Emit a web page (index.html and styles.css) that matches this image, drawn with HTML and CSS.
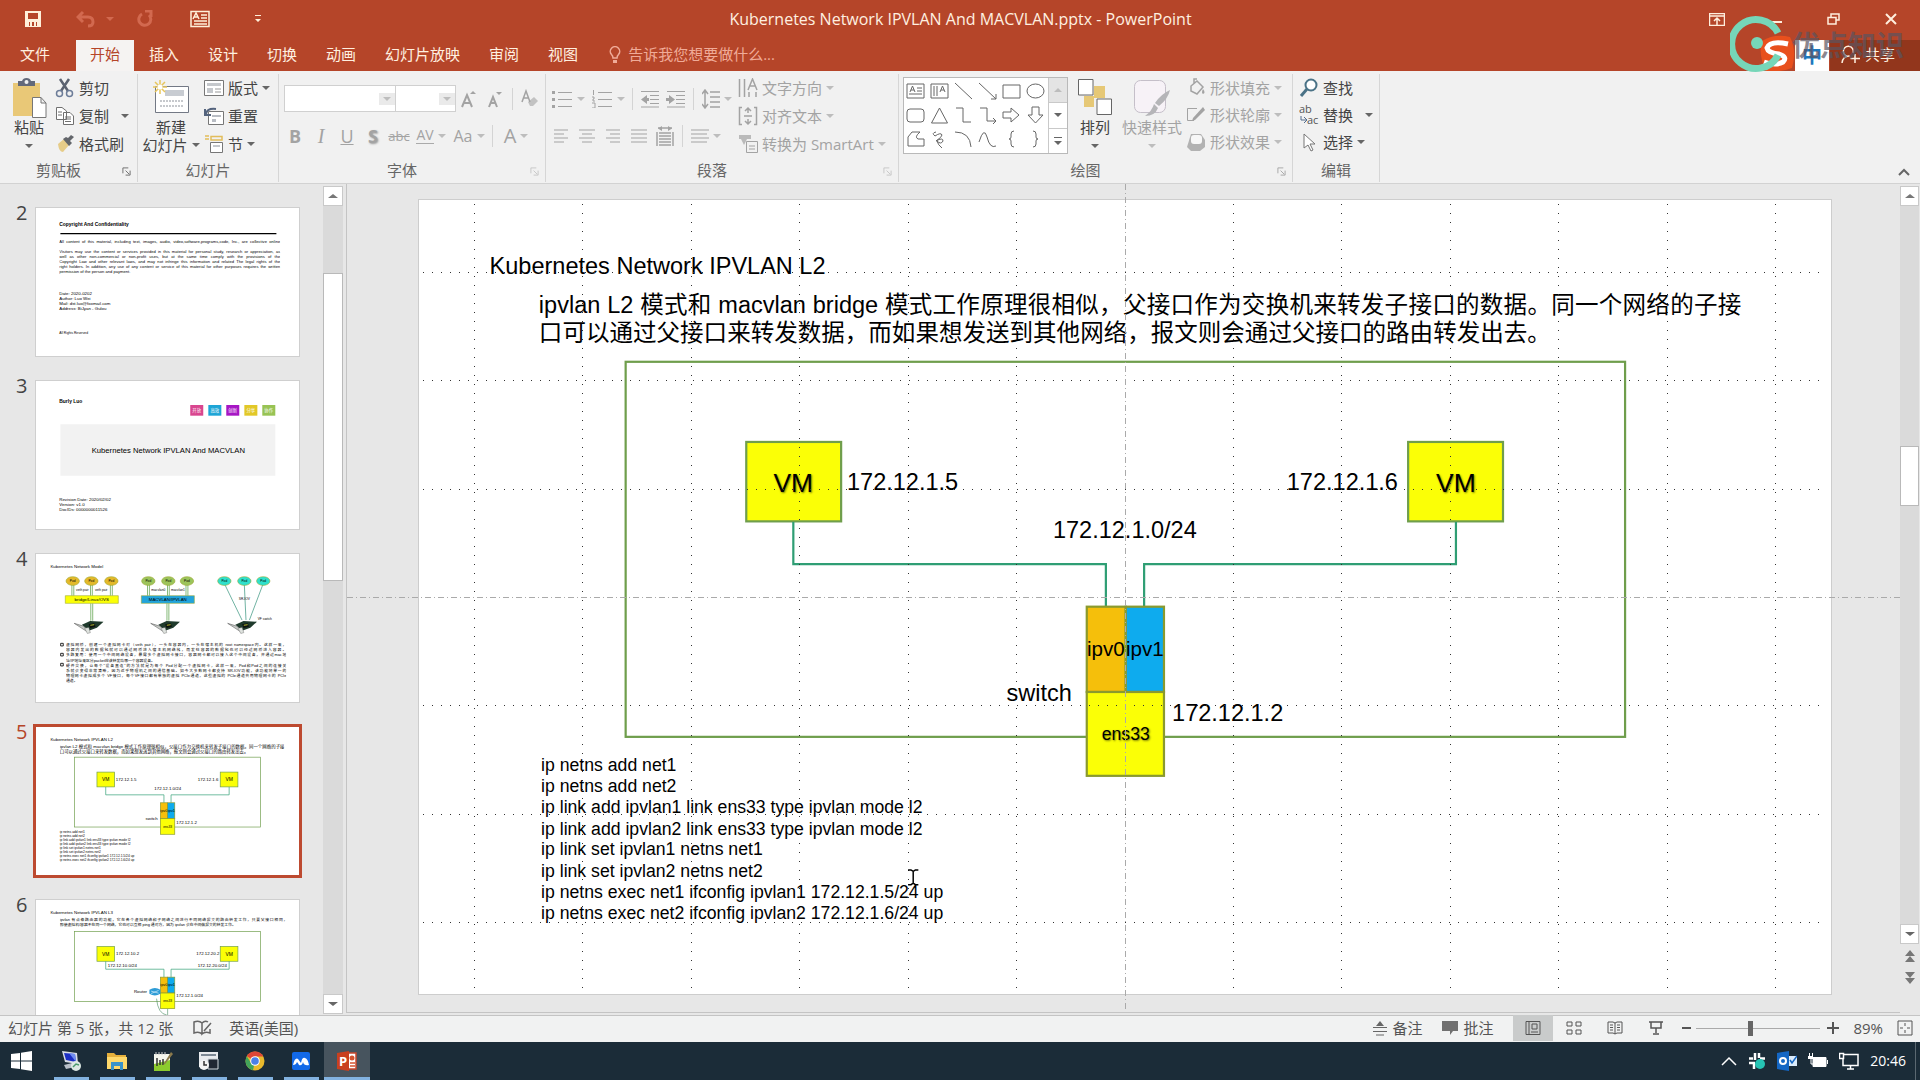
FILE: index.html
```html
<!DOCTYPE html>
<html lang="zh-CN">
<head>
<meta charset="utf-8">
<title>Kubernetes Network IPVLAN And MACVLAN.pptx - PowerPoint</title>
<link rel="stylesheet" href="styles.css">
</head>
<body>
<svg class="defs" aria-hidden="true">
  <symbol id="topology" viewBox="0 0 1920 1080">
    <g fill="none" stroke="#6f9e4c">
      <rect x="281" y="220" width="1359" height="510"/>
      <rect x="445" y="329" width="129" height="108" fill="#fbff06"/>
      <rect x="1345" y="329" width="129" height="108" fill="#fbff06"/>
    </g>
    <path d="M509 438V495H934V553M1410 438V495H986V553" fill="none" stroke="#2f9e74"/>
    <g stroke="#8a9a2e">
      <rect x="908" y="553" width="53" height="116" fill="#f5bf0b"/>
      <rect x="961" y="553" width="52" height="116" fill="#0eabee"/>
      <rect x="908" y="669" width="105" height="114" fill="#fbff06"/>
    </g>
  </symbol>
  <symbol id="nic" viewBox="0 0 220 110">
    <path d="M60 40L120 12L218 18L170 62L110 84Z" fill="#1f3a2c"/>
    <path d="M4 30L100 92L112 84L70 50Z" fill="#c9cdc9" stroke="#555" stroke-width="4"/>
    <path d="M80 66L100 104L122 98L110 60Z" fill="#dfe3df" stroke="#666" stroke-width="3"/>
    <path d="M110 36L150 30L160 54L120 64Z" fill="#0c120e"/>
    <path d="M122 44L150 40" stroke="#d8e23a" stroke-width="6"/>
  </symbol>
  <symbol id="launcher" viewBox="0 0 10 10"><path d="M1 7V1H7M4 4L8 8M9 4V9H4" fill="none" stroke="currentColor"/></symbol>
</svg>

<header class="top">
  <div class="titlebar">
    <div class="qat">
      <button aria-label="保存"><svg width="18" height="18" viewBox="0 0 18 18"><path d="M1 1H17V17H1Z" fill="#fff0da"/><path d="M4 3H14V9H4ZM5 12H13V16H5Z" fill="#b54529"/><path d="M6 12H8V16H6ZM10 12H12V16H10Z" fill="#fff0da"/></svg></button>
      <button class="faded undo" aria-label="撤消"><svg width="20" height="18" viewBox="0 0 20 18"><path d="M7 2L2 7L7 12M3 7H12Q17 7 17 12Q17 16 12 16" fill="none" stroke="currentColor" stroke-width="3"/></svg><i class="caret"></i></button>
      <button class="faded redo" aria-label="恢复"><svg width="18" height="18" viewBox="0 0 18 18"><path d="M6 4A6 6 0 1 0 13 5M9 1H15V7" fill="none" stroke="currentColor" stroke-width="3"/></svg></button>
      <button class="from-start" aria-label="文本框"><svg width="20" height="18" viewBox="0 0 20 18"><path d="M1 1.500H19V16.500H1ZM11 5H17M11 8H17M4 11H17M4 14H17" fill="none" stroke="#fff0da" stroke-width="1.500"/><path d="M3 9L6 3L9 9M4 7H8" fill="none" stroke="#fff0da" stroke-width="1.500"/></svg></button>
      <button class="more" aria-label="自定义"><svg width="8" height="8" viewBox="0 0 8 8"><path d="M1 0H7V1H1ZM1 4H7L4 7Z" fill="#fff0da"/></svg></button>
    </div>
    <h1>Kubernetes Network IPVLAN And MACVLAN.pptx - PowerPoint</h1>
    <div class="window-buttons">
      <button aria-label="功能区显示选项"><svg width="16" height="13" viewBox="0 0 16 13"><path d="M.5 .5H15.500V12.500H.5ZM.5 3H15.500M8 12V5M5 8L8 5L11 8" fill="none" stroke="#ffeedd" stroke-width="1.500"/></svg></button>
      <button aria-label="最小化"><svg width="12" height="12" viewBox="0 0 12 12"><path d="M1 9H12" stroke="#ffeedd" stroke-width="2"/></svg></button>
      <button aria-label="还原"><svg width="13" height="12" viewBox="0 0 13 12"><path d="M1 4.500H9V11H1ZM4 4V1H12V7H9" fill="none" stroke="#ffeedd" stroke-width="1.500"/></svg></button>
      <button aria-label="关闭"><svg width="12" height="12" viewBox="0 0 12 12"><path d="M1 1L11 11M11 1L1 11" stroke="#ffeedd" stroke-width="2"/></svg></button>
    </div>
  </div>
  <nav class="tabs">
    <button class="file">文件</button>
    <button class="active">开始</button>
    <button>插入</button>
    <button>设计</button>
    <button>切换</button>
    <button>动画</button>
    <button>幻灯片放映</button>
    <button>审阅</button>
    <button>视图</button>
    <button class="tell"><svg width="12" height="17" viewBox="0 0 12 17"><path d="M4 12Q4 10 2.500 8.500A4.700 4.700 0 1 1 9.500 8.500Q8 10 8 12Z" fill="none" stroke="currentColor" stroke-width="1.500"/><path d="M4 14H8V17H4Z" fill="currentColor"/></svg>告诉我您想要做什么...</button>
    <button class="share"><svg width="20" height="20" viewBox="0 0 20 20"><path d="M1 19Q2 12 8 12M14 10V19M9.500 14.500H19M9 12A5 5 0 1 1 12 9" fill="none" stroke="#fff0e0" stroke-width="1.500"/></svg>共享</button>
  </nav>
  <div class="ime" aria-hidden="true">
    <svg width="36" height="38" viewBox="0 0 36 38"><path d="M3 6Q16 -2 31 2Q38 16 33 33Q20 38 7 36Q-1 20 3 6Z" fill="#e8501d"/><path d="M29 9Q11 5 8 13Q9 18 20 19Q29 22 24 27Q17 31 5 27" fill="none" stroke="#fff" stroke-width="5"/></svg><span>中</span>
  </div>
  <div class="watermark" aria-hidden="true">
    <svg width="58" height="58" viewBox="0 0 58 58"><path d="M48 18A24.500 24.500 0 1 0 48 40" fill="none" stroke="#76d6b8" stroke-width="7"/><circle cx="27" cy="28" r="6" fill="#76d6b8"/></svg><span>优点知识</span>
  </div>
</header>

<section class="ribbon" aria-label="开始">
  <div class="group clipboard">
    <div class="body">
      <button class="big"><svg width="36" height="40" viewBox="0 0 36 40"><path d="M2 5H29V38H2Z" fill="#e9c877"/><path d="M7 8V3H11Q12 0 15.500 0Q19 0 20 3H24V8Z" fill="#63697a"/><circle cx="15.500" cy="4" r="2" fill="#f1f1f1"/><path d="M21.500 19.500H30L35 25V39.500H21.500ZM30 19.500V25H35" fill="#fff" stroke="#777"/></svg><span>粘贴</span><i class="caret"></i></button>
      <div class="stack">
        <button><svg width="20" height="20" viewBox="0 0 20 20"><path d="M5 1L13 13M14 1L6 13" stroke="#5b6270" stroke-width="2.500"/><circle cx="4.500" cy="15.500" r="3" fill="none" stroke="#6d7d99" stroke-width="1.500"/><circle cx="14.500" cy="15.500" r="3" fill="none" stroke="#6d7d99" stroke-width="1.500"/></svg>剪切</button>
        <button><svg width="20" height="20" viewBox="0 0 20 20"><path d="M1.500 1.500H7L11.500 5V13.500H1.500ZM8.500 6.500H15L18.500 10V18.500H8.500Z" fill="#fff" stroke="#707070"/><path d="M3 6H7M3 9H7M10 11H16M10 13H16M10 15.500H16" stroke="#707070"/></svg>复制<i class="caret far"></i></button>
        <button><svg width="20" height="20" viewBox="0 0 20 20"><path d="M3 10L9 5L14 11L8 18Q4 18 3 10Z" fill="#e6cc88"/><path d="M8 5L14 12L17 9L15 7L19 3L16 1L13 4L11 3Z" fill="#63666b"/></svg>格式刷</button>
      </div>
    </div>
    <div class="label launches">剪贴板<svg class="launch"><use href="#launcher"/></svg></div>
  </div>

  <div class="group slides">
    <div class="body">
      <button class="big"><svg width="38" height="40" viewBox="0 0 38 40"><path d="M3.500 8.500H36.500V34.500H3.500Z" fill="#fff" stroke="#737985"/><path d="M13 12H32V18H13Z" fill="#c8ccd2"/><path d="M8 23H32M8 28H32" stroke="#8d929a" stroke-dasharray="2 1"/><path d="M8 2V16M1 9H15M3 4L13 14M13 4L3 14" stroke="#e7c65c" stroke-width="1.500"/><circle cx="8" cy="9" r="2.500" fill="#fff"/></svg><span>新建</span><span class="line">幻灯片<i class="caret"></i></span></button>
      <div class="stack">
        <button><svg width="20" height="20" viewBox="0 0 20 20"><path d="M.5 2.500H19.500V17.500H.5Z" fill="#fff" stroke="#777"/><path d="M3 5H17V8H3ZM3 10H9V15H3Z" fill="#c5c8cc"/><path d="M11 11H17M11 14H17" stroke="#999"/></svg>版式<i class="caret"></i></button>
        <button><svg width="20" height="20" viewBox="0 0 20 20"><path d="M4.500 5.500H19.500V18.500H4.500Z" fill="#fff" stroke="#777"/><path d="M8 9H17V11H8ZM8 13H12V16H8Z" fill="#b9bdc4"/><path d="M2 8Q3 2 12 3M1 3V9H7" fill="none" stroke="#54637d" stroke-width="2"/></svg>重置</button>
        <button><svg width="20" height="20" viewBox="0 0 20 20"><path d="M1 2H5M1 5H5M7 2.500H18V6H7Z" fill="none" stroke="#e2bd5b" stroke-width="1.500"/><path d="M6.500 8.500H18.500V18.500H6.500Z" fill="#fff" stroke="#777"/><path d="M9 11H16V13H9Z" fill="#c5c8cc"/></svg>节<i class="caret"></i></button>
      </div>
    </div>
    <div class="label">幻灯片</div>
  </div>

  <div class="group font disabled">
    <div class="body"><div class="rows">
      <div class="row">
        <label class="combo face"><input type="text" aria-label="字体"><i class="caret"></i></label><label class="combo size"><input type="text" aria-label="字号"><i class="caret"></i></label>
        <button class="tool" aria-label="增大字号"><svg width="16" height="18" viewBox="0 0 16 18"><path d="M1 17L6 5L11 17M3 13H9" fill="none" stroke="currentColor" stroke-width="2"/><path d="M9 4L12 1L15 4Z" fill="currentColor"/></svg></button><button class="tool" aria-label="减小字号"><svg width="16" height="18" viewBox="0 0 16 18"><path d="M2 17L6 7L10 17M3 13H9" fill="none" stroke="currentColor" stroke-width="2"/><path d="M9 2H15L12 5Z" fill="currentColor"/></svg></button><i class="sep"></i>
        <button class="tool" aria-label="清除格式"><svg width="18" height="20" viewBox="0 0 18 20"><path d="M1 13L5 2L9 13M3 9H8" fill="none" stroke="currentColor" stroke-width="1.500"/><path d="M7 13L13 8L17 12L12 17H9Z" fill="currentColor" opacity=".6"/></svg></button>
      </div>
      <div class="row">
        <button class="tool"><b>B</b></button><button class="tool serif"><em>I</em></button><button class="tool"><u>U</u></button><button class="tool glow"><b>S</b></button><button class="tool abc"><s>abc</s></button>
        <button class="tool wide"><span class="av">AV</span><i class="caret"></i></button><button class="tool wide">Aa<i class="caret"></i></button><i class="sep"></i><button class="tool wide big-a">A<i class="caret"></i></button>
      </div>
    </div></div>
    <div class="label launches">字体<svg class="launch"><use href="#launcher"/></svg></div>
  </div>

  <div class="group paragraph disabled">
    <div class="body">
      <div class="rows">
        <div class="row">
          <button class="tool list" aria-label="项目符号"><svg width="20" height="18" viewBox="0 0 20 18"><path d="M0 1H3V4H0ZM0 8H3V11H0ZM0 15H3V18H0Z" fill="currentColor"/><path d="M6 2.500H20M6 9.500H20M6 16.500H20" stroke="currentColor"/></svg><i class="caret"></i></button>
          <button class="tool list" aria-label="编号"><svg width="20" height="18" viewBox="0 0 20 18"><path d="M1.500 0V5M0 7H2V9H1V11H3M0 13H3V18H0" fill="none" stroke="currentColor"/><path d="M6 2.500H20M6 9.500H20M6 16.500H20" stroke="currentColor"/></svg><i class="caret"></i></button>
          <i class="sep"></i>
          <button class="tool" aria-label="减少缩进"><svg width="20" height="18" viewBox="0 0 20 18"><path d="M1 1.500H19M10 5.500H19M10 9.500H19M10 13.500H19M1 17H19" stroke="currentColor"/><path d="M7 5L1 9.500L7 14V11H9V8H7Z" fill="currentColor"/></svg></button>
          <button class="tool" aria-label="增加缩进"><svg width="20" height="18" viewBox="0 0 20 18"><path d="M1 1.500H19M10 5.500H19M10 9.500H19M10 13.500H19M1 17H19" stroke="currentColor"/><path d="M3 5L9 9.500L3 14V11H0V8H3Z" fill="currentColor"/></svg></button>
          <i class="sep"></i>
          <button class="tool wide" aria-label="行距"><svg width="18" height="20" viewBox="0 0 18 20"><path d="M8 3H18M8 8H18M8 13H18M8 18H18M3 2V18M0 5L3 1L6 5M0 15L3 19L6 15" fill="none" stroke="currentColor" stroke-width="1.500"/></svg><i class="caret"></i></button>
        </div>
        <div class="row">
          <button class="tool" aria-label="左对齐"><svg width="16" height="14" viewBox="0 0 16 14"><path d="M1 1H15M1 5H11M1 9H15M1 13H11" stroke="currentColor"/></svg></button>
          <button class="tool" aria-label="居中"><svg width="16" height="14" viewBox="0 0 16 14"><path d="M0 1H16M3 5H13M0 9H16M3 13H13" stroke="currentColor"/></svg></button>
          <button class="tool" aria-label="右对齐"><svg width="16" height="14" viewBox="0 0 16 14"><path d="M1 1H15M5 5H15M1 9H15M5 13H15" stroke="currentColor"/></svg></button>
          <button class="tool" aria-label="两端对齐"><svg width="16" height="14" viewBox="0 0 16 14"><path d="M0 1H16M0 5H16M0 9H16M0 13H16" stroke="currentColor"/></svg></button>
          <button class="tool" aria-label="分散对齐"><svg width="18" height="20" viewBox="0 0 18 20"><path d="M1 6V20M17 6V20M3 7H15M3 10H15M3 13H15M3 16H15M3 19H15M2 2H16" stroke="currentColor" stroke-width="1.500"/><path d="M6 0L2 2.500L6 5M12 0L16 2.500L12 5" fill="currentColor"/></svg></button>
          <i class="sep"></i>
          <button class="tool wide" aria-label="分栏"><svg width="18" height="14" viewBox="0 0 18 14"><path d="M0 1H18M0 5H16M0 9H18M0 13H16" stroke="currentColor"/></svg><i class="caret"></i></button>
        </div>
      </div>
      <div class="stack">
        <button><svg width="20" height="20" viewBox="0 0 20 20"><path d="M1.500 1V19M6.500 1V19M10 12L14.500 1L19 12M12 8H17M11 19V14M18 19V14" fill="none" stroke="currentColor" stroke-width="1.500"/></svg>文字方向<i class="caret"></i></button>
        <button><svg width="20" height="20" viewBox="0 0 20 20"><path d="M4 1.500H1.500V18.500H4M16 1.500H18.500V18.500H16M10 2V7M7 5L10 2L13 5M10 13V18M7 15L10 18L13 15M6 10H14" fill="none" stroke="currentColor" stroke-width="1.500"/></svg>对齐文本<i class="caret"></i></button>
        <button><svg width="20" height="20" viewBox="0 0 20 20"><path d="M1 1H13V5H9L6 11L3 5H1Z" fill="currentColor" opacity=".7"/><path d="M8.500 7.500H19.500V18.500H8.500ZM11 12H17M11 15H17" fill="#f1f1f1" stroke="currentColor"/></svg>转换为 SmartArt<i class="caret"></i></button>
      </div>
    </div>
    <div class="label launches">段落<svg class="launch"><use href="#launcher"/></svg></div>
  </div>

  <div class="group drawing">
    <div class="body">
      <div class="gallery">
        <div class="shapes">
          <button aria-label="文本框"><svg><path d="M1 3H18V17H1ZM11 7H16M11 10H16M3 13H16M4 11L6.500 5L9 11M5 9H8"/></svg></button>
          <button aria-label="竖排文本框"><svg><path d="M1 3H18V17H1ZM4 5V15M7 5V15M10 11L12.500 5L15 11M11 9H14"/></svg></button>
          <button aria-label="直线"><svg><path d="M1 2L18 18"/></svg></button>
          <button aria-label="箭头"><svg><path d="M1 2L18 18M18 13V18H13"/></svg></button>
          <button aria-label="矩形"><svg><path d="M1 4H18V17H1Z"/></svg></button>
          <button aria-label="椭圆"><svg><ellipse cx="9.500" cy="10" rx="8.500" ry="7"/></svg></button>
          <button aria-label="圆角矩形"><svg><rect x="1" y="4" width="17" height="13" rx="3"/></svg></button>
          <button aria-label="三角形"><svg><path d="M9.500 3L17.500 18H1.500Z"/></svg></button>
          <button aria-label="肘形连接符"><svg><path d="M2 3H9V17H17"/></svg></button>
          <button aria-label="肘形箭头"><svg><path d="M2 3H9V16H18M15 13L18 16L15 19"/></svg></button>
          <button aria-label="右箭头"><svg><path d="M1 7H9V3L17 10L9 17V13H1Z"/></svg></button>
          <button aria-label="下箭头"><svg><path d="M6 2V10H2L9.500 18L17 10H13V2Z"/></svg></button>
          <button aria-label="任意多边形"><svg><path d="M2 17V8L6 3H14Q8 8 12 10H18V17Z"/></svg></button>
          <button aria-label="自由曲线"><svg><path d="M6 3Q1 4 5 7Q11 3 12 6Q12 8 6 12Q13 8 13 12Q11 16 7 12Q8 16 12 19"/></svg></button>
          <button aria-label="弧形"><svg><path d="M1 3Q16 3 17 18"/></svg></button>
          <button aria-label="曲线"><svg><path d="M1 13Q6 -3 9 8Q12 20 18 17"/></svg></button>
          <button aria-label="左大括号"><svg><path d="M12 2Q9 2 9 5V8Q9 10 7 10Q9 10 9 12V15Q9 18 12 18"/></svg></button>
          <button aria-label="右大括号"><svg><path d="M7 2Q10 2 10 5V8Q10 10 12 10Q10 10 10 12V15Q10 18 7 18"/></svg></button>
        </div>
        <div class="pager"><button class="off" aria-label="上一行"><i class="caret up"></i></button><button aria-label="下一行"><i class="caret"></i></button><button aria-label="更多"><svg width="8" height="8" viewBox="0 0 8 8"><path d="M0 0H8V1H0ZM0 4H8L4 8Z" fill="#666"/></svg></button></div>
      </div>
      <button class="big"><svg width="36" height="40" viewBox="0 0 36 40"><path d="M17 8H28V20H17V29H7V18H17Z" fill="#e6c876"/><path d="M1.500 1.500H16V17H1.500ZM20 21H34.500V36.500H20Z" fill="#fff" stroke="#666"/></svg><span>排列</span><i class="caret"></i></button>
      <button class="big styles off"><svg width="38" height="40" viewBox="0 0 38 40"><rect x="1.500" y="2.500" width="31" height="32" rx="6" fill="#f7f2f7" stroke="#c5bfc9"/><path d="M37 12Q35 21 26 28L22 25Q28 16 37 12ZM21 26L25 30Q22 38 12 38Q19 33 21 26Z" fill="#b5b5b8"/></svg><span>快速样式</span><i class="caret"></i></button>
      <div class="stack tight off">
        <button><svg width="20" height="20" viewBox="0 0 20 20"><path d="M5 8L11 3L17 9L11 16L5 13ZM8 6V1H11" fill="none" stroke="currentColor" stroke-width="1.500"/><path d="M17 11Q20 15 17 16Q15 15 17 11" fill="currentColor"/></svg>形状填充<i class="caret"></i></button>
        <button><svg width="20" height="20" viewBox="0 0 20 20"><path d="M11 3.500H1.500V15.500H8" fill="none" stroke="currentColor"/><path d="M17 2L19 5L9 15L6 16L7 13Z" fill="currentColor"/></svg>形状轮廓<i class="caret"></i></button>
        <button><svg width="20" height="20" viewBox="0 0 20 20"><path d="M5 2H15L19 8V15L14 19H5L1 15Z" fill="currentColor" opacity=".8"/><rect x="5" y="3" width="11" height="9" rx="3" fill="#f7f7f7"/></svg>形状效果<i class="caret"></i></button>
      </div>
    </div>
    <div class="label launches">绘图<svg class="launch off"><use href="#launcher"/></svg></div>
  </div>

  <div class="group editing">
    <div class="body">
      <div class="stack tight">
        <button><svg width="20" height="20" viewBox="0 0 20 20"><circle cx="12" cy="7" r="5.500" fill="#fff" stroke="#4a7286" stroke-width="2"/><path d="M8 11L2 18" stroke="#4a7286" stroke-width="3"/></svg>查找</button>
        <button><svg width="20" height="20" viewBox="0 0 20 20"><text x="0" y="8" font-size="11">ab</text><text x="8" y="19" font-size="11">ac</text><path d="M2 11V15H7M5 12L8 15L5 18" fill="none" stroke="#546c8c"/></svg>替换<i class="caret far"></i></button>
        <button><svg width="20" height="20" viewBox="0 0 20 20"><path d="M5 2V16L9 13L12 19L14 18L11 12H16Z" fill="#fff" stroke="#777"/></svg>选择<i class="caret"></i></button>
      </div>
    </div>
    <div class="label">编辑</div>
  </div>
  <button class="collapse" aria-label="折叠功能区"><svg width="12" height="8" viewBox="0 0 12 8"><path d="M1 7L6 2L11 7" fill="none" stroke="#666" stroke-width="2"/></svg></button>
</section>

<main class="workspace">
  <ol class="thumbs">
    <li><span>2</span>
      <svg viewBox="0 0 1920 1080">
        <g class="arial">
          <text x="170" y="134" font-size="36" font-weight="700">Copyright And Confidentiality</text>
          <path d="M178 187H1755" stroke="#000" stroke-width="8"/>
          <g font-size="32"><text x="170" y="637">Date: 2020-0202</text><text x="170" y="674">Author: Luo Wei</text><text x="170" y="710">Mail: dst.luo@foxmail.com</text><text x="170" y="747">Address: BiJyan - Gulou</text></g>
          <text x="170" y="922" font-size="24">All Rights Reserved</text>
        </g>
        <foreignObject x="170" y="224" width="1613" height="290"><div class="tiny latin">
          <p>All content of this material, including text, images, audio, video,software,programs,code, Inc., are collective online</p>
          <p class="space">Visitors may use the content or services provided in this material for personal study, research or appreciation, as</p>
          <p>well as other non-commercial or non-profit uses, but at the same time comply with the provisions of the</p>
          <p>Copyright Law and other relevant laws, and may not infringe this information and related The legal rights of the</p>
          <p>right holders. In addition, any use of any content or service of this material for other purposes requires the written</p>
          <p class="last">permission of the person and payment.</p>
        </div></foreignObject>
      </svg></li>
    <li><span>3</span>
      <svg viewBox="0 0 1920 1080">
        <path d="M178 316H1747V691H178Z" fill="#f2f2f2"/>
        <path d="M1126 175H1221V253H1126Z" fill="#d9468f"/><path d="M1258 175H1353V253H1258Z" fill="#1ea5d6"/><path d="M1389 175H1484V253H1389Z" fill="#a616c4"/><path d="M1521 175H1616V253H1521Z" fill="#e2c828"/><path d="M1652 175H1747V253H1652Z" fill="#98c354"/>
        <g class="cjk" font-size="32" fill="#fff" text-anchor="middle"><text x="1173" y="226">开放</text><text x="1305" y="226">高效</text><text x="1436" y="226">创新</text><text x="1568" y="226">分享</text><text x="1699" y="226">协作</text></g>
        <g class="arial"><text x="170" y="158" font-size="36" font-weight="700">Burly Luo</text>
          <text x="966" y="523" font-size="56" text-anchor="middle">Kubernetes Network IPVLAN And MACVLAN</text>
          <g font-size="32"><text x="170" y="876">Revision Date: 2020/02/02</text><text x="170" y="912">Version: v1.0</text><text x="170" y="949">DocIDs: 0000000011526</text></g></g>
      </svg></li>
    <li><span>4</span>
      <svg viewBox="0 0 1920 1080">
        <g fill="none" stroke="#4f9a3c" stroke-width="5">
          <path d="M262 226V304M276 226V304M398 226V304M411 226V304M543 226V304M557 226V304M400 360V487M414 360V487M814 226V304M828 226V304M960 226V304M973 226V304M1095 226V304M1109 226V304M956 360V487M970 360V487"/>
          <path d="M1380 226L1504 482M1521 226L1533 482M1655 226L1558 482" stroke="#2f8f78"/>
        </g>
        <g stroke="#9aa52a" stroke-width="4"><g fill="#e3b92a"><ellipse cx="268" cy="197" rx="49" ry="32"/><ellipse cx="404" cy="197" rx="49" ry="32"/><ellipse cx="550" cy="197" rx="49" ry="32"/></g>
        <g fill="#9cc45b"><ellipse cx="820" cy="197" rx="49" ry="32"/><ellipse cx="966" cy="197" rx="49" ry="32"/><ellipse cx="1102" cy="197" rx="49" ry="32"/></g>
        <g fill="#2fe0cc"><ellipse cx="1375" cy="197" rx="49" ry="32"/><ellipse cx="1521" cy="197" rx="49" ry="32"/><ellipse cx="1659" cy="197" rx="49" ry="32"/></g>
        <path d="M214 304H601V360H214Z" fill="#fbff06"/><path d="M769 304H1156V360H769Z" fill="#22a4dc"/></g>
        <use href="#nic" x="275" y="476" width="220" height="110"/><use href="#nic" x="833" y="476" width="220" height="110"/><use href="#nic" x="1395" y="476" width="220" height="110"/>
        <g class="arial" text-anchor="middle">
          <g font-size="24"><text x="268" y="205">Pod</text><text x="404" y="205">Pod</text><text x="550" y="205">Pod</text><text x="820" y="205">Pod</text><text x="966" y="205">Pod</text><text x="1102" y="205">Pod</text><text x="1375" y="205">Pod</text><text x="1521" y="205">Pod</text><text x="1659" y="205">Pod</text>
          <text x="338" y="272">veth pair</text><text x="476" y="272">veth pair</text><text x="893" y="272">macvlan0</text><text x="1036" y="272">macvlan1</text><text x="1521" y="336">SR-IOV</text><text x="1670" y="482">VF switch</text></g>
          <text x="407" y="342" font-size="32">bridge/Linux/OVS</text><text x="962" y="342" font-size="32">MACVLAN/IPVLAN</text>
        </g>
        <text class="arial" x="105" y="105" font-size="32">Kubernetes Network Model</text>
        <path d="M180 652H199V671H180ZM180 725H199V744H180ZM180 798H199V817H180Z" fill="none" stroke="#000" stroke-width="6"/>
        <foreignObject x="219" y="646" width="1608" height="310"><div class="tiny">
          <p>虚拟网桥，创建一个虚拟网卡对（veth pair），一头在容器内，一头在宿主机的 root namespace内。这样一来，</p>
          <p>容器内发出的数据包就可以通过网桥进入宿主机网络栈，而发往容器的数据包也可以经过网桥进入容器。</p>
          <p>多路复用：使用一个中间网络设备，暴露多个虚拟网卡接口，容器网卡都可以接入这个中间设备，并通过mac地</p>
          <p class="last">址/IP地址来区分packet应该转发给哪一个容器设备。</p>
          <p>硬件交换，让每个“设备直连”的方法就是为每个 Pod分配一个虚拟网卡，这样一来，Pod和Pod之间的连接关</p>
          <p>系就会变得非常清晰，因为近乎物理机之间的通信基础。如今大多数网卡都支持 SR-IOV功能，该功能将单一的</p>
          <p>物理网卡虚拟成多个 VF接口，每个VF接口都有单独的虚拟 PCIe通道，这些虚拟的 PCIe通道共用物理网卡的 PCIe</p>
          <p class="last">通道。</p>
        </div></foreignObject>
      </svg></li>
    <li class="selected"><span>5</span>
      <svg viewBox="0 0 1920 1080"><use href="#topology"/>
        <g class="arial" text-anchor="middle">
          <g font-size="36"><text x="509" y="397">VM</text><text x="1410" y="397">VM</text></g>
          <g font-size="28"><text x="933" y="620">ipv0</text><text x="989" y="620">ipv1</text></g>
          <text x="961" y="734" font-size="24">ens33</text>
        </g>
        <g class="arial" font-size="32">
          <text x="105" y="101">Kubernetes Network IPVLAN L2</text>
          <text x="583" y="394">172.12.1.5</text><text x="1181" y="394">172.12.1.6</text><text x="864" y="460">172.12.1.0/24</text><text x="800" y="681">switch</text><text x="1024" y="709">172.12.1.2</text>
        </g>
        <g class="arial" font-size="24">
          <text x="174" y="776">ip netns add net1</text><text x="174" y="805">ip netns add net2</text>
          <text x="174" y="834">ip link add ipvlan1 link ens33 type ipvlan mode l2</text><text x="174" y="863">ip link add ipvlan2 link ens33 type ipvlan mode l2</text>
          <text x="174" y="891">ip link set ipvlan1 netns net1</text><text x="174" y="920">ip link set ipvlan2 netns net2</text>
          <text x="174" y="949">ip netns exec net1 ifconfig ipvlan1 172.12.1.5/24 up</text><text x="174" y="978">ip netns exec net2 ifconfig ipvlan2 172.12.1.6/24 up</text>
        </g>
        <foreignObject x="174" y="125" width="1640" height="90"><p class="slide-text">ipvlan L2 模式和 macvlan bridge 模式工作原理很相似，父接口作为交换机来转发子接口的数据。同一个网络的子接口可以通过父接口来转发数据，而如果想发送到其他网络，报文则会通过父接口的路由转发出去。</p></foreignObject>
      </svg></li>
    <li><span>6</span>
      <svg viewBox="0 0 1920 1080"><use href="#topology" y="10"/>
        <path d="M880 720Q890 830 955 840M961 795V860" fill="none" stroke="#33804f" stroke-width="4"/>
        <path d="M828 655Q868 630 908 655V685Q868 710 828 685Z" fill="#2e9cd6"/><path d="M840 665L895 680M895 660L840 683" stroke="#d5eefa" stroke-width="5"/>
        <g class="arial" text-anchor="middle">
          <g font-size="36"><text x="509" y="407">VM</text><text x="1410" y="407">VM</text></g>
          <g font-size="28"><text x="933" y="630">ipv0</text><text x="989" y="630">ipv1</text></g>
          <text x="961" y="744" font-size="24">ens33</text>
        </g>
        <g class="arial" font-size="32"><text x="105" y="104">Kubernetes Network IPVLAN L3</text><text x="584" y="398">172.12.10.2</text><text x="1170" y="398">172.12.20.2</text><text x="524" y="486">172.12.10.0/24</text><text x="1180" y="486">172.12.20.0/24</text><text x="715" y="676">Router</text><text x="1024" y="705">172.12.1.0/24</text></g>
        <foreignObject x="174" y="125" width="1660" height="90"><div class="tiny"><p>ipvlan 有点像路由器的功能，它在各个虚拟网络和子网络之间进行不同网络报文的路由转发工作，只要父接口相同，</p><p class="last">即使虚拟机/容器不在同一个网络，它也可以互相 ping 通对方，因为 ipvlan 会在中间做报文的转发工作。</p></div></foreignObject>
      </svg></li>
  </ol>
  <div class="scroll left" aria-hidden="true"><b><i class="caret up"></i></b><span class="before"></span><span class="thumb"></span><span class="after"></span><b><i class="caret"></i></b></div>
  <section class="stage">
    <div class="slide">
      <svg viewBox="0 0 1920 1080">
        <use href="#topology"/>
        <g class="arial" text-anchor="middle">
          <g class="shadowed" font-size="36"><text x="509" y="397">VM</text><text x="1410" y="397">VM</text></g>
          <g font-size="28"><text x="934" y="620">ipv0</text><text x="987" y="620">ipv1</text></g>
          <text class="shadowed" x="961" y="734" font-size="24">ens33</text>
        </g>
        <g class="arial" font-size="32">
          <text x="96" y="101">Kubernetes Network IPVLAN L2</text>
          <text x="582" y="394">172.12.1.5</text>
          <text x="1180" y="394">172.12.1.6</text>
          <text x="862" y="460">172.12.1.0/24</text>
          <text x="799" y="681">switch</text>
          <text x="1024" y="709">172.12.1.2</text>
        </g>
        <g class="arial" font-size="24">
          <text x="166" y="776">ip netns add net1</text>
          <text x="166" y="805">ip netns add net2</text>
          <text x="166" y="834">ip link add ipvlan1 link ens33 type ipvlan mode l2</text>
          <text x="166" y="863">ip link add ipvlan2 link ens33 type ipvlan mode l2</text>
          <text x="166" y="891">ip link set ipvlan1 netns net1</text>
          <text x="166" y="920">ip link set ipvlan2 netns net2</text>
          <text x="166" y="949">ip netns exec net1 ifconfig ipvlan1 172.12.1.5/24 up</text>
          <text x="166" y="978">ip netns exec net2 ifconfig ipvlan2 172.12.1.6/24 up</text>
        </g>
        <foreignObject x="163" y="124" width="1635" height="90"><p class="slide-text">ipvlan L2 模式和 macvlan bridge 模式工作原理很相似，父接口作为交换机来转发子接口的数据。同一个网络的子接口可以通过父接口来转发数据，而如果想发送到其他网络，报文则会通过父接口的路由转发出去。</p></foreignObject>
        <path class="grid" d="M76 6V1074M223 6V1074M371 6V1074M518 6V1074M665 6V1074M813 6V1074M1107 6V1074M1255 6V1074M1402 6V1074M1549 6V1074M1697 6V1074M1844 6V1074M6 99H1914M6 246H1914M6 393H1914M6 688H1914M6 835H1914M6 982H1914"/>
        <path d="M665 911H669L672 913L675 911H679M672 913V929M665 931H669L672 929L675 931H679" fill="none" stroke="#000" stroke-width="2"/>
      </svg>
    </div>
  </section>
  <div class="scroll right" aria-hidden="true"><b><i class="caret up"></i></b><span class="before"></span><span class="thumb"></span><span class="after"></span><b><i class="caret"></i></b>
    <svg width="12" height="36" viewBox="0 0 12 36"><path d="M6 0L11 6H1ZM6 6L11 12H1ZM1 22H11L6 28ZM1 28H11L6 34Z" fill="#777"/></svg></div>
</main>

<footer class="status">
  <span>幻灯片 第 5 张，共 12 张</span>
  <button class="proof" aria-label="校对"><svg width="20" height="16" viewBox="0 0 20 16"><path d="M9 14Q6 11 1 13V2Q6 0 9 3Q12 0 15 2M9 3V14Q12 11 17 13V9M11 11L18 3" fill="none" stroke="#666" stroke-width="1.500"/></svg></button>
  <button>英语(美国)</button>
  <div class="right-side">
    <button class="notes"><svg width="14" height="16" viewBox="0 0 14 16"><path d="M7 1L11 6H3Z" fill="#666"/><path d="M0 7.500H14M0 11.500H14M3 15H11" stroke="#666"/></svg>备注</button>
    <button class="comments"><svg width="16" height="16" viewBox="0 0 16 16"><path d="M0 1H16V11H11L8 15V11H0Z" fill="#707070"/></svg>批注</button>
    <button class="view on" aria-label="普通视图"><svg width="16" height="16" viewBox="0 0 16 16"><path d="M1 1.500H15V14.500H1ZM4 1V15M7 4H12V9H7ZM6 12H13" fill="none" stroke="#555"/></svg></button>
    <button class="view" aria-label="幻灯片浏览"><svg width="16" height="16" viewBox="0 0 16 16"><path d="M1 2H6V6H1ZM10 2H15V6H10ZM1 10H6V14H1ZM10 10H15V14H10Z" fill="none" stroke="#555"/></svg></button>
    <button class="view" aria-label="阅读视图"><svg width="16" height="16" viewBox="0 0 16 16"><path d="M1 2H6L8 3L10 2H15V13H10L8 14L6 13H1ZM8 3V14M3 5H6M3 7.500H6M3 10H6M10 5H13M10 7.500H13M10 10H13" fill="none" stroke="#555"/></svg></button>
    <button class="view" aria-label="幻灯片放映"><svg width="16" height="16" viewBox="0 0 16 16"><path d="M1 2H15M3 2V8H13V2M8 8V13M5 14H11" fill="none" stroke="#555" stroke-width="1.500"/></svg></button>
    <button class="zoom-step" aria-label="缩小"><svg width="12" height="12" viewBox="0 0 12 12"><path d="M1 6H10" stroke="#555" stroke-width="2"/></svg></button>
    <input type="range" min="0" max="100" value="43" aria-label="显示比例">
    <button class="zoom-step" aria-label="放大"><svg width="12" height="12" viewBox="0 0 12 12"><path d="M0 6H12M6 0V12" stroke="#555" stroke-width="2"/></svg></button>
    <button class="percent">89%</button>
    <button class="fit" aria-label="适应窗口"><svg width="16" height="16" viewBox="0 0 16 16"><path d="M1 1H15V15H1ZM8 3V6M8 10V13M3 8H6M10 8H13" fill="none" stroke="#555"/></svg></button>
  </div>
</footer>

<nav class="taskbar" aria-label="任务栏">
  <button class="start" aria-label="开始"><svg width="21" height="20" viewBox="0 0 21 20"><path d="M0 3L9 2V9.500H0ZM10 1.800L21 0V9.500H10ZM0 10.500H9V18L0 17ZM10 10.500H21V20L10 18.200Z" fill="#fff"/></svg></button>
  <button aria-label="远程终端"><svg width="22" height="22" viewBox="0 0 22 22"><path d="M2 1L17 3L18 14L5 12Z" fill="#d9dde6"/><path d="M4 3L15 4L16 12L6 10Z" fill="#1c2ec4"/><path d="M9 3L15 4L16 12Z" fill="#6f8cf0"/><path d="M4 15L12 13L15 17L6 19Z" fill="#b9c0c9"/><circle cx="16" cy="16" r="5" fill="#dce8e4"/><path d="M13 17L16 14L19 15" stroke="#4a9a6c" fill="none" stroke-width="1.500"/></svg></button>
  <button aria-label="文件资源管理器"><svg width="20" height="20" viewBox="0 0 20 20"><path d="M0 2H7L9 4H19V8H0Z" fill="#e5b03c"/><path d="M0 6H20V18H0Z" fill="#ffd96b"/><path d="M4 11H16V19H13V15H7V19H4Z" fill="#3a93c9"/></svg></button>
  <button aria-label="文本编辑器"><svg width="20" height="22" viewBox="0 0 20 22"><path d="M1 4H17V21H1Z" fill="#f5f7ee"/><path d="M1 14L17 10V21H1Z" fill="#8ccb2e"/><path d="M3 2V5M6 2V5M9 2V5M12 2V5" stroke="#ccc"/><path d="M4 8V16M7 10V15M10 9V15" stroke="#333" stroke-width="1.500"/><path d="M18 2L20 4L12 14L10 15Z" fill="#8b7a4c"/></svg></button>
  <button aria-label="控制台"><svg width="22" height="20" viewBox="0 0 22 20"><path d="M1 1H20V16H1Z" fill="#e8ebee"/><path d="M3 3H18V5H3Z" fill="#7c8894"/><path d="M10 8H20V18H10Z" fill="#202833" stroke="#cfd6dc"/><circle cx="6" cy="14" r="5" fill="#f4f4f4"/><path d="M6 10V14H9" stroke="#333" fill="none" stroke-width="1.500"/></svg></button>
  <button aria-label="Chrome"><svg width="20" height="20" viewBox="0 0 20 20"><circle cx="10" cy="10" r="9.500" fill="#e8b92c"/><path d="M10 10L1.800 5.200A9.500 9.500 0 0 1 18.300 5.500H10Z" fill="#dd4637"/><path d="M10 10L8 19.300A9.500 9.500 0 0 1 1.800 5.200L6 12Z" fill="#42a45a"/><circle cx="10" cy="10" r="4.800" fill="#fff"/><circle cx="10" cy="10" r="3.800" fill="#4a80e8"/></svg></button>
  <button aria-label="会议"><svg width="20" height="20" viewBox="0 0 20 20"><rect x="1" y="1" width="18" height="18" rx="2" fill="#1269e8"/><path d="M2 14Q4 6 7 8L10 12Q11 6 14 7Q17 8 18 14Q13 15 12 11Q11 15 8 14Q7 12 6 11Q5 14 2 14Z" fill="#fff"/></svg></button>
  <button class="active" aria-label="PowerPoint"><svg width="20" height="20" viewBox="0 0 20 20"><path d="M9 2H19V18H9Z" fill="#fff" stroke="#c9472c" stroke-width="1.500"/><path d="M0 2L12 0V20L0 18Z" fill="#c9401f"/><text x="2" y="15" font-size="13" font-weight="700" fill="#fff">P</text><circle cx="15" cy="7" r="2.500" fill="#d5532f"/><path d="M13 12H18M13 15H18" stroke="#d5532f" stroke-width="1.500"/></svg></button>
  <div class="tray">
    <button aria-label="显示隐藏的图标"><svg width="16" height="10" viewBox="0 0 16 10"><path d="M1 9L8 2L15 9" fill="none" stroke="#fff" stroke-width="1.500"/></svg></button>
    <button aria-label="Slack"><svg width="18" height="18" viewBox="0 0 18 18"><path d="M7 1V8M1 6.500H5M11 1V6M17 6.500H12M1 11H7M6 12V17" stroke="#fff" stroke-width="2.500"/><circle cx="12" cy="12" r="5" fill="#26c4b4"/></svg></button>
    <button aria-label="Outlook"><svg width="20" height="20" viewBox="0 0 20 20"><path d="M0 2L12 0V20L0 18Z" fill="#1467c4"/><path d="M12 5H20V15H12Z" fill="#dcecfb"/><path d="M13 9L15 12L20 5" stroke="#1467c4" stroke-width="1.500" fill="none"/><circle cx="6" cy="10" r="3" fill="none" stroke="#fff" stroke-width="2"/></svg></button>
    <button aria-label="电池"><svg width="20" height="16" viewBox="0 0 20 16"><path d="M5 4.500H18V13.500H5Z" fill="#fff" stroke="#fff"/><path d="M19 7H20V11H19ZM0 3H5V6H0ZM1 0H2V3H1ZM4 0H5V3H4Z" fill="#fff"/><path d="M3 6V11H6" fill="none" stroke="#fff"/></svg></button>
    <button aria-label="网络"><svg width="20" height="18" viewBox="0 0 20 18"><path d="M4 2.500H19V13.500H4V7M11.500 14V17M8 17H15M.5 1.500H4.500V6.500H.5Z" fill="none" stroke="#fff" stroke-width="1.500"/></svg></button>
    <time>20:46</time>
    <i class="desktop"></i>
  </div>
</nav>
</body>
</html>
```
FILE: styles.css
```css
* { box-sizing: border-box; }
body {
  margin: 0; height: 100vh; display: flex; flex-direction: column; overflow: hidden;
  font: 15px/20px "Open Sans", "Noto Sans CJK SC", sans-serif; color: #444; background: #e7e7e7;
}
button { background: none; border: 0; padding: 0; font: inherit; color: inherit; display: flex; align-items: center; white-space: nowrap; }
svg { display: block; flex: none; }
.defs { width: 0; height: 0; position: absolute; }
.arial { font-family: "Liberation Sans", Arial, sans-serif; }
.cjk { font-family: "Noto Sans CJK SC", sans-serif; }
.caret { display: inline-block; flex: none; width: 0; height: 0; border: 4px solid transparent; border-top-color: #666; border-bottom: 0; }
.caret.up { border-bottom: 4px solid #777; border-top: 0; }
.caret.far { margin-left: 8px; }

/* title bar and tabs */
.top { position: relative; background: #b54529; color: #fff0e0; flex: none; }
.titlebar { display: flex; align-items: center; height: 40px; padding: 0 23px 2px 24px; }
.qat, .window-buttons { display: flex; align-items: center; flex: 1; }
.qat .undo { margin-left: 34px; gap: 10px; }
.qat .redo { margin-left: 22px; }
.qat .from-start { margin-left: 36px; }
.qat .more { margin-left: 44px; }
.faded { color: #d2694f; }
.faded .caret { border-top-color: #d2694f; }
h1 { margin: 0; font-size: 16px; font-weight: 400; }
.window-buttons { justify-content: flex-end; gap: 45px; }
.tabs { display: flex; gap: 1px; height: 31px; }
.tabs button { padding: 0 14px 3px; height: 31px; }
.tabs .file { width: 75px; padding-left: 20px; }
.tabs .active { background: #f5f3f2; color: #b54529; }
.tabs .tell { color: #f0ab98; gap: 7px; padding-left: 16px; }
.tabs .share { margin-left: auto; width: 90px; background: #92361c; justify-content: flex-end; gap: 4px; padding-right: 25px; }
.ime { position: absolute; right: 91px; bottom: 0; display: flex; height: 36px; }
.ime span { background: #fff; color: #1e78bd; font: 700 20px/30px "Noto Sans CJK SC", sans-serif; width: 34px; height: 31px; align-self: flex-end; text-align: center; }
.watermark { position: absolute; right: 16px; top: 15px; display: flex; z-index: 1; }
.watermark span { font: 700 28px/58px "Noto Sans CJK SC", sans-serif; color: #5b5460; opacity: .7; margin-left: 4px; }

/* ribbon */
.ribbon { display: flex; height: 113px; background: #f1f1f1; border-bottom: 1px solid #d2d2d2; flex: none; padding: 3px 0 1px; position: relative; }
.group { display: flex; flex-direction: column; border-right: 1px solid #d6d6d6; }
.body { display: flex; flex: 1; }
.label { position: relative; height: 22px; text-align: center; color: #666; }
.label.launches { padding-right: 20px; }
.launch { position: absolute; right: 6px; top: 7px; width: 9px; height: 9px; }
.stack { display: flex; flex-direction: column; }
.stack button { height: 28px; gap: 4px; }
.stack.tight button { height: 27px; }
.big { flex-direction: column; padding-top: 4px; height: 84px; }
.big span { line-height: 18px; display: flex; align-items: center; gap: 4px; }
.big > .caret { margin-top: 8px; }
.clipboard { width: 138px; }
.clipboard .body { padding-left: 3px; }
.clipboard .big { width: 52px; }
.slides { width: 141px; }
.slides .body { padding-left: 5px; gap: 5px; }
.slides .big { width: 56px; }
.font { width: 267px; }
.font .body { padding-left: 3px; }
.paragraph { width: 353px; }
.paragraph .rows { width: 190px; padding-left: 2px; }
.paragraph .stack { margin-left: 2px; }
.drawing { width: 394px; }
.drawing .body { padding-left: 4px; }
.editing { width: 87px; }
.editing .body { padding-left: 6px; }
.editing text { fill: #555; font-family: "Open Sans", sans-serif; }
.disabled .body, .off { color: #a3a3a3; }
.disabled .body .caret, .off .caret { border-top-color: #bdbdbd; }
.disabled .launch { color: #c4c4c4; }
.rows { display: flex; flex-direction: column; flex: none; gap: 10px; padding-top: 11px; }
.row { display: flex; align-items: center; height: 27px; }
.tool { width: 26px; height: 24px; justify-content: center; font-size: 18px; }
.tool.wide { width: 38px; gap: 4px; font-size: 16px; }
.tool.list { width: 40px; gap: 5px; }
.tool.big-a { font-size: 20px; }
.tool.abc { font-size: 13px; }
.tool.serif { font-family: "Liberation Serif", serif; font-size: 20px; }
.tool.glow { text-shadow: 1px 1px 2px #999; }
.av { font-size: 14px; line-height: 16px; border-bottom: 1px solid #aaa; }
.sep { width: 1px; height: 22px; background: #d4d4d4; margin: 0 4px; }
.combo { display: flex; align-items: center; height: 27px; background: #fff; border: 1px solid #d0d0d0; margin-left: -1px; }
.combo input { flex: 1; min-width: 0; height: 25px; border: 0; background: none; padding: 0 4px; font: inherit; }
.combo .caret { box-shadow: 0 0 0 4px #eaeaea; margin-right: 4px; background: #eaeaea; }
.combo.face { width: 112px; margin-left: 2px; }
.combo.size { width: 61px; }
.gallery { display: flex; margin-top: 3px; height: 77px; border: 1px solid #b9b9b9; background: #fff; }
.shapes { display: grid; grid-template-columns: repeat(6, 24px); grid-auto-rows: 24px; padding: 1px 0; }
.shapes button { justify-content: center; }
.shapes svg { width: 20px; height: 20px; fill: none; stroke: #666; }
.pager { width: 19px; display: flex; flex-direction: column; border-left: 1px solid #c9c9c9; }
.pager button { flex: 1; justify-content: center; }
.pager button + button { border-top: 1px solid #c9c9c9; }
.pager .off { background: #e4e4e4; }
.pager .off .caret { border-bottom-color: #bdbdbd; }
.drawing .big { width: 46px; margin-left: 4px; }
.drawing .styles { width: 64px; margin-left: 2px; }
.drawing .stack { margin-left: 2px; }
.collapse { position: absolute; right: 10px; bottom: 7px; }

/* thumbnails, scroll bars and slide */
.workspace { flex: 1; min-height: 0; display: grid; grid-template-columns: 323px 20px 1fr 20px; }
.thumbs { list-style: none; margin: 0; padding: 24px 0 0 16px; overflow: hidden; display: flex; flex-direction: column; gap: 25px; min-height: 0; }
.thumbs li { display: flex; }
.thumbs span { width: 20px; font-size: 20px; line-height: 10px; }
.thumbs svg { background: #fff; width: 263px; height: 148px; outline: 1px solid #cfcfcf; }
.thumbs use { stroke-width: 5px; }
.thumbs .selected span { color: #b54529; }
.thumbs .selected svg { outline: 3px solid #bd4a30; }
.tiny { font: 28px/37px "Liberation Sans", "Noto Sans CJK SC", sans-serif; color: #000; }
.tiny.latin { font-size: 30px; }
.tiny p { margin: 0; white-space: nowrap; text-align: justify; text-align-last: justify; }
.tiny .last { text-align-last: left; }
.tiny .space { margin-top: 37px; }
.shadowed { text-shadow: 1px 1px 2px rgba(0, 0, 0, .5); }
.slide-text { margin: 0; font: 32px/38px "Liberation Sans", "Noto Sans CJK SC", sans-serif; color: #000; text-align: justify; text-justify: inter-word; }
.scroll { display: flex; flex-direction: column; align-items: stretch; background: #e7e7e7; }
.scroll b { height: 20px; flex: none; background: #fff; border: 1px solid #c9c9c9; display: flex; align-items: center; justify-content: center; }
.scroll .caret { border-left-width: 5px; border-right-width: 5px; }
.scroll .before, .scroll .after { background: #dadada; }
.scroll .thumb { background: #fff; border: 1px solid #b9b9b9; }
.left { padding: 2px 0 1px; }
.left .before { flex: 67; }
.left .thumb { flex: 308; }
.left .after { flex: 415; }
.right { padding-top: 2px; padding-right: 1px; }
.right .before { flex: 241; }
.right .thumb { flex: 59; }
.right .after { flex: 420; }
.right svg { align-self: center; margin: 6px 0 29px; }
.stage { border-left: 1px solid #c4c4c4; margin-left: 3px; margin-bottom: 2px; border-bottom: 1px solid #c4c4c4; padding: 16px 69px 0 72px; min-width: 0; overflow: hidden; }
.slide { position: relative; background: #fff; outline: 1px solid #cdcdcd; }
.slide svg { width: 100%; height: auto; }
.slide use { stroke-width: 3px; }
.grid { fill: none; stroke: #333; stroke-width: 1px; stroke-dasharray: 1 8; vector-effect: non-scaling-stroke; shape-rendering: crispEdges; }
.slide::before, .slide::after { content: ""; position: absolute; z-index: 1; }
.slide::before { left: 50%; top: -16px; bottom: -16px; width: 1px; background: repeating-linear-gradient(#aaa 0 6px, transparent 6px 9px, #aaa 9px 10px, transparent 10px 13px); }
.slide::after { top: 50%; left: -72px; right: -69px; height: 1px; background: repeating-linear-gradient(90deg, #aaa 0 6px, transparent 6px 9px, #aaa 9px 10px, transparent 10px 13px); }

/* status bar */
.status { flex: none; display: flex; align-items: center; height: 27px; background: #f1f2f2; border-top: 1px solid #c4c4c4; padding: 0 0 2px 8px; color: #555; }
.proof { margin: 0 16px 0 20px; }
.right-side { margin-left: auto; display: flex; align-items: center; height: 24px; }
.notes, .comments { gap: 5px; margin-right: 20px; }
.view { width: 40px; height: 26px; justify-content: center; margin-right: 1px; }
.view.on { background: #c9cbcb; }
.zoom-step { margin-left: 4px; }
.status input { appearance: none; width: 124px; height: 16px; margin: 0 3px; background: linear-gradient(#aaa, #aaa) center / 100% 1px no-repeat; }
.status input::-webkit-slider-thumb { appearance: none; width: 5px; height: 15px; background: #666; }
.percent { margin: 0 14px; }
.fit { margin-right: 7px; }

/* task bar */
.taskbar { flex: none; height: 38px; display: flex; background: #1b2c38; color: #fff; }
.taskbar > button { width: 46px; justify-content: center; background: linear-gradient(#82b2e0, #82b2e0) bottom / 35px 3px no-repeat; }
.taskbar > .start { width: 48px; padding-right: 5px; background: none; }
.taskbar > .active { background: linear-gradient(#82b2e0, #82b2e0) bottom / 100% 3px no-repeat #47545e; }
.taskbar text { font-family: "Open Sans", sans-serif; }
.tray { margin-left: auto; display: flex; align-items: center; gap: 11px; }
.tray time { font-size: 14px; }
.desktop { width: 5px; height: 38px; border-left: 1px solid #5b6871; margin-left: -2px; }
```
